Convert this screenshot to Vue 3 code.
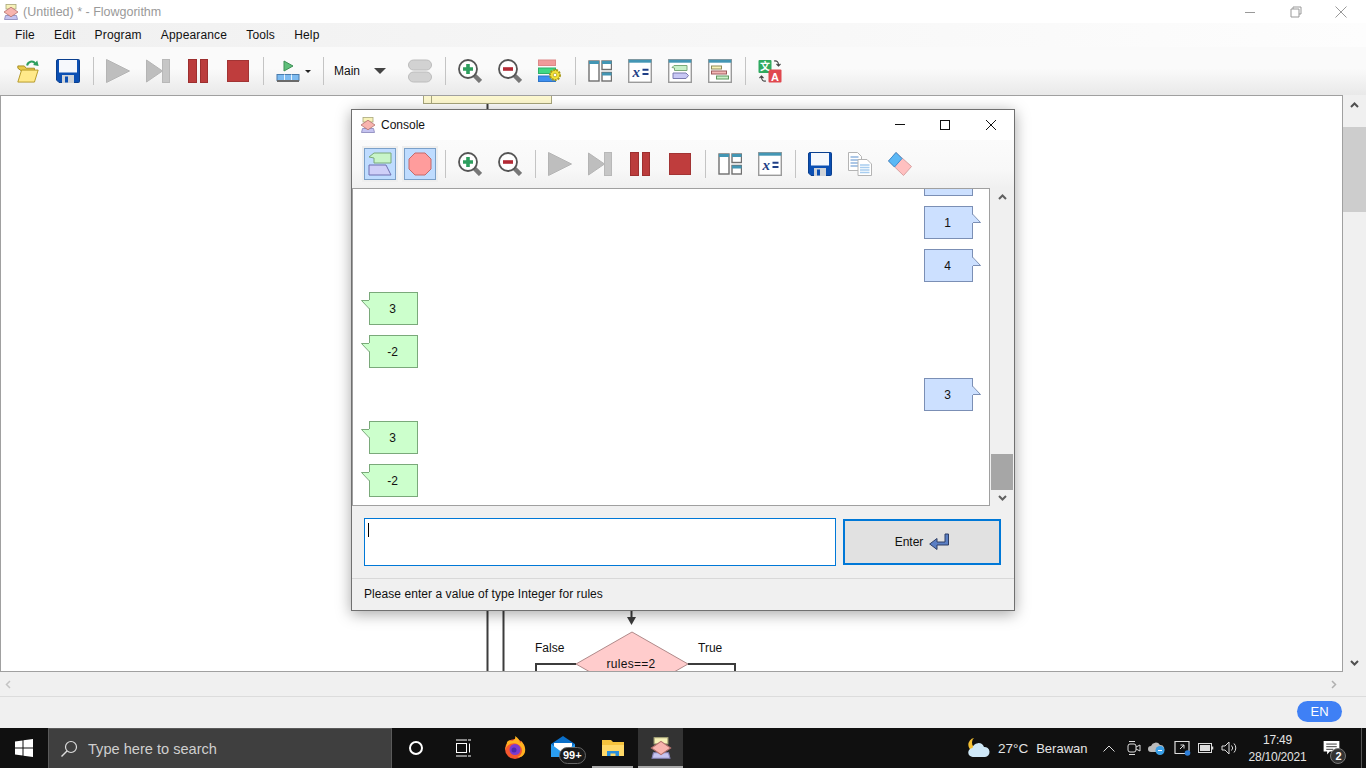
<template>
  <div class="app">
    <!-- icon sprite -->
    <svg class="sprite" aria-hidden="true">
      <symbol id="i-logo" viewBox="0 0 16 16">
        <rect x="3" y="0.5" width="10" height="4.5" fill="#f7f2b8" stroke="#a9a77a" stroke-width="0.8" />
        <path d="M2.5 11.5h11l1 4h-13z" fill="#c5c3f0" stroke="#8583b8" stroke-width="0.8" />
        <path d="M8 3.2 15 8 8 12.8 1 8z" fill="#f8b4ae" stroke="#b3706c" stroke-width="0.8" />
      </symbol>
      <symbol id="i-open" viewBox="0 0 24 26">
        <path d="M1 10V7.5h7l2 2.5h9v3H5z" fill="#e8c94a" stroke="#a58a1e" />
        <path d="M5 12h18l-4 13H1z" fill="#ffe98a" stroke="#b29520" />
        <path d="M11 7c1-4 6-6 9-2" fill="none" stroke="#2e9e5e" stroke-width="2.2" />
        <path d="M17.5 6.5 23.5 7.5 22 1.5z" fill="#2e9e5e" />
      </symbol>
      <symbol id="i-save" viewBox="0 0 24 24">
        <path d="M0.5 2Q0.5 0.5 2 0.5h20.5q1 0 1 1v21q0 1-1 1H3l-2.5-2.5z" fill="#0b4fb3" stroke="#0a3f8e" />
        <rect x="3" y="1" width="18" height="12.5" fill="#f6f8fc" />
        <rect x="6" y="16" width="12" height="8" fill="#cfd3d8" />
        <rect x="9" y="17.5" width="3" height="6" fill="#0b4fb3" />
      </symbol>
      <symbol id="i-play" viewBox="0 0 24 24">
        <path d="M0.5 0.5 23.5 12 0.5 23.5z" fill="#bebebe" stroke="#b4b4b4" />
      </symbol>
      <symbol id="i-step" viewBox="0 0 24 24">
        <path d="M0.5 1 16.5 12 0.5 23z" fill="#bebebe" stroke="#b4b4b4" />
        <rect x="16.5" y="0.5" width="7" height="23" fill="#c6c6c6" stroke="#b8b8b8" />
      </symbol>
      <symbol id="i-pause" viewBox="0 0 24 24">
        <rect x="2.5" y="0.5" width="8" height="23" fill="#bb3c3c" stroke="#9d2f2f" />
        <rect x="14.5" y="0.5" width="7" height="23" fill="#bb3c3c" stroke="#9d2f2f" />
      </symbol>
      <symbol id="i-stop" viewBox="0 0 24 24">
        <rect x="1.5" y="1.5" width="21" height="21" fill="#bf3d3d" stroke="#a23434" />
      </symbol>
      <symbol id="i-run" viewBox="0 0 24 24">
        <path d="M8 2 17 7 8 12z" fill="#5fbf7a" stroke="#3c8f55" />
        <rect x="1" y="15.5" width="22" height="6" fill="#7dbbf0" stroke="#4a7bab" />
        <path d="M8.5 15.5v6M15.5 15.5v6" stroke="#e8f2fb" />
        <rect x="1" y="21" width="22" height="2" fill="#6a6a6a" />
      </symbol>
      <symbol id="i-pills" viewBox="0 0 24 24">
        <rect x="0.5" y="1" width="23" height="10" rx="5" fill="#d2d2d2" stroke="#bcbcbc" />
        <rect x="0.5" y="13" width="23" height="10" rx="5" fill="#d2d2d2" stroke="#bcbcbc" />
      </symbol>
      <symbol id="i-zoomin" viewBox="0 0 24 24">
        <path d="M15 15 22.5 22.5" stroke="#777" stroke-width="4.5" />
        <circle cx="10" cy="10" r="9" fill="#fff" stroke="#555" stroke-width="1.8" />
        <path d="M10 5v10M5 10h10" stroke="#2e9e5e" stroke-width="3.6" />
      </symbol>
      <symbol id="i-zoomout" viewBox="0 0 24 24">
        <path d="M15 15 22.5 22.5" stroke="#777" stroke-width="4.5" />
        <circle cx="10" cy="10" r="9" fill="#fff" stroke="#555" stroke-width="1.8" />
        <path d="M5 10h10" stroke="#b32a35" stroke-width="3.6" />
      </symbol>
      <symbol id="i-layers" viewBox="0 0 24 24">
        <rect x="0.5" y="1" width="17" height="5.5" fill="#f09a9a" stroke="#d88" />
        <rect x="0.5" y="9" width="17" height="5.5" fill="#3fd884" stroke="#2fb06a" />
        <rect x="0.5" y="17" width="17" height="5.5" fill="#3d8ff0" stroke="#2f75c8" />
        <circle cx="17" cy="16" r="5" fill="#f5e33a" stroke="#a89a1a" stroke-width="2" stroke-dasharray="2 1" />
        <circle cx="17" cy="16" r="1.8" fill="#fff" stroke="#a89a1a" stroke-width="0.7" />
      </symbol>
      <symbol id="i-layout" viewBox="0 0 24 24">
        <rect x="1" y="2" width="10" height="20" fill="#fff" stroke="#707070" stroke-width="1.4" />
        <rect x="1" y="2" width="10" height="3" fill="#4396b4" />
        <rect x="14" y="2" width="9.5" height="8.5" fill="#fff" stroke="#707070" stroke-width="1.4" />
        <rect x="14" y="2" width="9.5" height="3" fill="#4396b4" />
        <rect x="14" y="13.5" width="9.5" height="8.5" fill="#fff" stroke="#707070" stroke-width="1.4" />
        <rect x="14" y="13.5" width="9.5" height="3" fill="#4396b4" />
      </symbol>
      <symbol id="i-vars" viewBox="0 0 24 24">
        <rect x="0.7" y="0.7" width="22.6" height="22.6" fill="#fff" stroke="#9a9a9a" stroke-width="1.4" />
        <rect x="0.7" y="0.7" width="22.6" height="3" fill="#4396b4" />
        <path d="M14.5 10.7h6M14.5 15h6" stroke="#1f3f86" stroke-width="2" />
      </symbol>
      <symbol id="i-console" viewBox="0 0 24 24">
        <rect x="0.7" y="0.7" width="22.6" height="22.6" fill="#fff" stroke="#9a9a9a" stroke-width="1.4" />
        <rect x="0.7" y="0.7" width="22.6" height="3" fill="#4396b4" />
        <path d="M6 6.5h13v5H6.500v-2.500L4 8.500z" fill="#c8f0c8" stroke="#7aa97a" />
        <path d="M5 14h13l2.500 2.500-2.500 3H5z" fill="#c8c8f5" stroke="#7a7ab0" />
      </symbol>
      <symbol id="i-chart" viewBox="0 0 24 24">
        <rect x="0.7" y="0.7" width="22.6" height="22.6" fill="#fff" stroke="#9a9a9a" stroke-width="1.4" />
        <rect x="0.7" y="0.7" width="22.6" height="3" fill="#4396b4" />
        <rect x="3.5" y="7" width="10" height="3" fill="#f7f2b8" stroke="#8d8b5a" />
        <rect x="3.5" y="12" width="15" height="3" fill="#f5b8b8" stroke="#9c5a5a" />
        <rect x="8.5" y="17" width="12" height="3" fill="#c8f0c8" stroke="#5f965f" />
      </symbol>
      <symbol id="i-translate" viewBox="0 0 24 24">
        <rect x="0.5" y="1" width="13" height="13" rx="1" fill="#2faa5f" />
        <rect x="10.5" y="10.5" width="13" height="13" rx="1" fill="#e0484f" />
        <path d="M16 2c3-.5 4.500 1 4.500 4M18.500 5l2 2 2-2" fill="none" stroke="#444" stroke-width="1.1" />
        <path d="M8 22c-3 .5-4.500-1-4.500-4M1.500 19l2-2 2 2" fill="none" stroke="#444" stroke-width="1.1" />
      </symbol>
      <symbol id="i-copy" viewBox="0 0 24 24">
        <path d="M.5.5h9l4 4v14H.5z" fill="#fff" stroke="#b4b4b4" />
        <path d="M2.500 5h8M2.500 8h8M2.500 11h8M2.500 14h8" stroke="#5b8fce" stroke-width="1.2" />
        <path d="M10 7.500h9l4.500 4.500v11.500H10z" fill="#fff" stroke="#b4b4b4" />
        <path d="M12 13h9.500M12 15.500h9.500M12 18h9.500M12 20.500h9.500" stroke="#a8cdf0" stroke-width="1.3" />
      </symbol>
      <symbol id="i-eraser" viewBox="0 0 24 24">
        <path d="M8 .5 23.500 14.500 15.500 23.500 .5 9z" fill="#ffc0c0" stroke="#d8a0a0" />
        <path d="M8 .5 14 6.500 6.500 15 .5 9z" fill="#5cb8f5" stroke="#3a8ed0" />
      </symbol>
    </svg>

    <!-- app title bar -->
    <header class="titlebar">
      <svg class="title-logo"><use href="#i-logo" /></svg>
      <span class="title-text">(Untitled) * - Flowgorithm</span>
      <div class="win-controls">
        <svg width="12" height="12" viewBox="0 0 12 12"><path d="M0 6.500h10" stroke="#999" /></svg>
        <svg width="12" height="12" viewBox="0 0 12 12"><path d="M3 3V1h8v7H9M1 3h8v8H1z" fill="none" stroke="#999" /></svg>
        <svg width="12" height="12" viewBox="0 0 12 12"><path d="M.5.5l11 11M11.500.5l-11 11" stroke="#999" /></svg>
      </div>
    </header>

    <nav class="menubar">
      <span v-for="m in menus" :key="m" class="menu-item">{{ m }}</span>
    </nav>

    <div class="toolbar">
      <template v-for="(t, i) in toolsLeft" :key="'l' + i">
        <span v-if="t === '|'" class="sep"></span>
        <span v-else class="tool"><svg class="ico"><use :href="'#i-' + t" /></svg></span>
      </template>
      <span class="tool tool-run">
        <svg class="ico"><use href="#i-run" /></svg>
        <svg class="mini-caret" width="6" height="3" viewBox="0 0 6 3"><path d="M0 0h6L3 3z" fill="#222" /></svg>
      </span>
      <span class="sep sep-narrow"></span>
      <span class="fn-select">
        <span>Main</span>
        <svg width="12" height="6" viewBox="0 0 12 6"><path d="M0 0h12L6 6z" fill="#444" /></svg>
      </span>
      <template v-for="(t, i) in toolsRight" :key="'r' + i">
        <span v-if="t === '|'" class="sep"></span>
        <span v-else class="tool">
          <svg class="ico" viewBox="0 0 24 24">
            <use :href="'#i-' + t" width="24" height="24" />
            <text v-if="t === 'vars'" x="4.5" y="18" class="var-x">x</text>
            <template v-if="t === 'translate'">
              <text x="7" y="11" class="tr-zh">文</text>
              <text x="17" y="21.500" class="tr-a">A</text>
            </template>
          </svg>
        </span>
      </template>
    </div>

    <main class="workspace">
      <div class="canvas">
        <!-- flowchart behind the console -->
        <svg class="flow" width="1342" height="576" viewBox="0 0 1342 576">
          <rect x="422.500" y="-4" width="128" height="11.500" fill="#fdf8cf" stroke="#a8a67c" />
          <path d="M430.500 0v7" stroke="#a8a67c" />
          <path d="M486.500 8v20M486.500 500v80M502.500 500v80" stroke="#3c3c3c" stroke-width="2" />
          <path d="M630.500 500v22" stroke="#3c3c3c" stroke-width="2" />
          <path d="M626 521h9l-4.500 8z" fill="#3c3c3c" />
          <path d="M575 568H535v12M687 568h47v12" fill="none" stroke="#3c3c3c" stroke-width="2" />
          <path d="M631 536 687 568 631 600 575 568z" fill="#ffcccc" stroke="#b08a8a" />
          <text x="534" y="556" class="flow-label">False</text>
          <text x="697" y="556" class="flow-label">True</text>
          <text x="630" y="572" text-anchor="middle" class="flow-label cond-label">rules==2</text>
        </svg>

        <!-- console window -->
        <section class="console">
          <div class="con-title">
            <svg class="title-logo"><use href="#i-logo" /></svg>
            <span>Console</span>
            <div class="con-controls">
              <svg width="12" height="12" viewBox="0 0 12 12"><path d="M0 5.500h10" stroke="#111" /></svg>
              <svg width="12" height="12" viewBox="0 0 12 12"><rect x=".5" y="1.500" width="9" height="9" fill="none" stroke="#111" /></svg>
              <svg width="12" height="12" viewBox="0 0 12 12"><path d="M1 1l10 10M11 1 1 11" stroke="#111" /></svg>
            </div>
          </div>

          <div class="con-toolbar">
            <span class="toggle">
              <svg class="ico" viewBox="0 0 24 24">
                <path d="M6 1h17v10H6V6L1 5z" fill="#c8f5c8" stroke="#7aa97a" />
                <path d="M1 13h17l5 10H1z" fill="#cfcff8" stroke="#6f6fb0" />
              </svg>
            </span>
            <span class="toggle">
              <svg class="ico" viewBox="0 0 24 24">
                <path d="M7 1h10l6 6v10l-6 6H7l-6-6V7z" fill="#ff9c9c" stroke="#c46a6a" />
              </svg>
            </span>
            <template v-for="(t, i) in consoleTools" :key="i">
              <span v-if="t === '|'" class="sep"></span>
              <span v-else class="tool">
                <svg class="ico" viewBox="0 0 24 24">
                  <use :href="'#i-' + t" width="24" height="24" />
                  <text v-if="t === 'vars'" x="4.5" y="18" class="var-x">x</text>
                </svg>
              </span>
            </template>
          </div>

          <div class="con-body">
            <div class="messages">
              <div v-for="(msg, i) in messages" :key="i" class="row" :class="msg.from">
                <div class="bubble">
                  <svg class="tail" width="9" height="18" viewBox="0 0 9 18">
                    <template v-if="msg.from === 'user'">
                      <path d="M0 8 9 17H0z" class="tail-fill" />
                      <path d="M0 7.500 8.500 16.500H1" class="tail-line" />
                    </template>
                    <template v-else>
                      <path d="M9 8H0L9 17z" class="tail-fill" />
                      <path d="M8 8.500H.5L8.500 17" class="tail-line" />
                    </template>
                  </svg>
                  {{ msg.text }}
                </div>
              </div>
            </div>
            <div class="con-scroll">
              <svg width="9" height="6" viewBox="0 0 9 6"><path d="M1 5l3.500-3.500L8 5" fill="none" stroke="#606060" stroke-width="2" /></svg>
              <div class="con-thumb"></div>
              <svg width="9" height="6" viewBox="0 0 9 6"><path d="M1 1l3.500 3.500L8 1" fill="none" stroke="#606060" stroke-width="2" /></svg>
            </div>
          </div>

          <div class="con-input">
            <div class="input-box"><span class="cursor"></span></div>
            <button class="enter-btn">
              Enter
              <svg width="20" height="18" viewBox="0 0 20 18">
                <path d="M19.500 1v11H8v4.500L.7 11 8 5.500V9h8V1z" fill="#5b7fc4" stroke="#2f3f66" />
              </svg>
            </button>
          </div>
          <div class="con-status">Please enter a value of type Integer for rules</div>
        </section>
      </div>

      <aside class="vscroll">
        <svg width="9" height="6" viewBox="0 0 9 6"><path d="M1 5l3.500-3.500L8 5" fill="none" stroke="#505050" stroke-width="2" /></svg>
        <div class="vthumb"></div>
        <svg width="9" height="6" viewBox="0 0 9 6"><path d="M1 1l3.500 3.500L8 1" fill="none" stroke="#505050" stroke-width="2" /></svg>
      </aside>
    </main>

    <div class="hscroll">
      <svg width="6" height="9" viewBox="0 0 6 9"><path d="M5 1 1.500 4.500 5 8" fill="none" stroke="#c4c4c4" stroke-width="1.5" /></svg>
      <svg width="6" height="9" viewBox="0 0 6 9"><path d="M1 1l3.500 3.500L1 8" fill="none" stroke="#b0b0b0" stroke-width="1.5" /></svg>
    </div>

    <div class="statusbar"><span class="lang-pill">EN</span></div>

    <!-- windows taskbar -->
    <footer class="taskbar">
      <span class="start">
        <svg width="18" height="18" viewBox="0 0 18 18">
          <path d="M0 2.500 7.500 1.400v7.100H0zM8.500 1.300 18 0v8.500H8.500zM0 9.500h7.500v7.100L0 15.500zM8.500 9.500H18V18l-9.500-1.300z" fill="#fff" />
        </svg>
      </span>
      <div class="search">
        <svg width="18" height="18" viewBox="0 0 18 18">
          <circle cx="11" cy="7" r="5.500" fill="none" stroke="#ddd" stroke-width="1.2" />
          <path d="M7 11 1.500 16.500" stroke="#ddd" stroke-width="1.4" />
        </svg>
        <span>Type here to search</span>
      </div>
      <span class="task-btn">
        <svg width="16" height="16" viewBox="0 0 16 16"><circle cx="8" cy="8" r="6" fill="none" stroke="#fff" stroke-width="2" /></svg>
      </span>
      <span class="task-btn">
        <svg width="18" height="18" viewBox="0 0 18 18">
          <path d="M1 1h11M1 17h11M13 1h3M13 17h3M14.500 4.500v9" stroke="#fff" fill="none" />
          <rect x="1.500" y="4.500" width="10" height="9" fill="none" stroke="#fff" />
        </svg>
      </span>
      <span class="task-btn firefox">
        <svg width="24" height="24" viewBox="0 0 24 24">
          <circle cx="12" cy="13" r="10" fill="#f5572f" />
          <path d="M4 6c0 3-2 6-2 8 3-8 12-9 16-3 2 3 1 9-4 10 6 1 9-4 8-9-1-4-3-6-4-7 0 2-1 2-1 2 0-3-2-5-5-7 1 3-1 4-3 5-2-1-3-1-5 1z" fill="#ffb21f" />
          <circle cx="12" cy="13.500" r="5.500" fill="#7b3bd0" />
          <circle cx="11" cy="14" r="2.500" fill="#4a2ab0" />
        </svg>
      </span>
      <span class="task-btn mail">
        <svg width="24" height="24" viewBox="0 0 24 24">
          <path d="M0 8 12 0l12 8v12H0z" fill="#0a6fc9" />
          <path d="M3 7h18v9H3z" fill="#fff" />
          <path d="M0 8l12 9 12-9v13H0z" fill="#2a9df0" />
        </svg>
        <span class="mail-count">99+</span>
      </span>
      <span class="task-btn running">
        <svg width="22" height="20" viewBox="0 0 22 20">
          <path d="M0 2h9l2 2h11v14H0z" fill="#f5c33d" />
          <path d="M0 7h22v11H0z" fill="#ffd968" />
          <path d="M5 18v-5h12v5h-3.500v-2.500h-5V18z" fill="#2a8fdc" />
        </svg>
      </span>
      <span class="task-btn active">
        <svg width="22" height="22"><use href="#i-logo" /></svg>
      </span>

      <div class="tray">
        <svg class="weather" width="24" height="22" viewBox="0 0 24 22">
          <path d="M7 1a7 7 0 1 0 8 9A6 6 0 0 1 7 1z" fill="#f5c033" />
          <path d="M6 20a4.500 4.500 0 0 1-.5-9 6 6 0 0 1 11.500-1 5 5 0 0 1 1 10z" fill="#cfe8f7" />
        </svg>
        <span class="temp">27°C</span>
        <span class="cond">Berawan</span>
        <svg class="chev" width="12" height="7" viewBox="0 0 12 7"><path d="M.5 6.500 6 1l5.500 5.500" fill="none" stroke="#ddd" /></svg>
        <svg width="14" height="16" viewBox="0 0 14 16">
          <rect x="1" y="4" width="8" height="8" rx="2" fill="none" stroke="#ddd" />
          <path d="M9 7l4-2v6l-4-2M2 1.500h6M2 14.500h6" fill="none" stroke="#ddd" />
        </svg>
        <svg width="18" height="14" viewBox="0 0 18 14">
          <path d="M3 11a3 3 0 0 1 0-6 5 5 0 0 1 9-1 4 4 0 0 1 3 7z" fill="#bbb" />
          <circle cx="12" cy="9.500" r="4.500" fill="#3aa0e8" />
          <path d="M10 9.500h4" stroke="#fff" />
        </svg>
        <svg width="18" height="16" viewBox="0 0 18 16">
          <path d="M2 13V1.500h14V11" fill="none" stroke="#ddd" stroke-width="1.2" />
          <path d="M1.500 13.500h11M7 9l4-4M7.500 5H11v3.500" fill="none" stroke="#ddd" />
          <circle cx="14.500" cy="13" r="2.800" fill="#2f7fd8" />
        </svg>
        <svg width="16" height="10" viewBox="0 0 16 10">
          <rect x=".5" y=".5" width="13" height="9" fill="none" stroke="#ddd" />
          <rect x="2" y="2" width="10" height="6" fill="#ddd" />
          <path d="M14.500 3.500v3" stroke="#ddd" stroke-width="1.5" />
        </svg>
        <svg width="17" height="14" viewBox="0 0 17 14">
          <path d="M1 5h3l4-4v12l-4-4H1z" fill="none" stroke="#ddd" />
          <path d="M10.500 4.500a3.500 3.500 0 0 1 0 5M13 2.500a6.500 6.500 0 0 1 0 9" fill="none" stroke="#ddd" />
        </svg>
        <div class="clock"><span>17:49</span><span>28/10/2021</span></div>
        <span class="notify">
          <svg width="17" height="14" viewBox="0 0 18 16">
            <path d="M0 0h18v12H7l-3 3.500V12H0z" fill="#fff" />
            <path d="M3 3.500h12M3 6.500h12M3 9.500h8" stroke="#222" />
          </svg>
          <span class="notify-count">2</span>
        </span>
      </div>
    </footer>
  </div>
</template>

<script setup>
const menus = ['File', 'Edit', 'Program', 'Appearance', 'Tools', 'Help'];

const toolsLeft = ['open', 'save', '|', 'play', 'step', 'pause', 'stop', '|'];
const toolsRight = ['pills', '|', 'zoomin', 'zoomout', 'layers', '|', 'layout', 'vars', 'console', 'chart', '|', 'translate'];
const consoleTools = ['|', 'zoomin', 'zoomout', '|', 'play', 'step', 'pause', 'stop', '|', 'layout', 'vars', '|', 'save', 'copy', 'eraser'];

// oldest one is scrolled mostly out of view
const messages = [
  { from: 'user', text: '' },
  { from: 'user', text: '1' },
  { from: 'user', text: '4' },
  { from: 'prog', text: '3' },
  { from: 'prog', text: '-2' },
  { from: 'user', text: '3' },
  { from: 'prog', text: '3' },
  { from: 'prog', text: '-2' },
];
</script>

<style>
html, body {
  margin: 0;
  height: 100%;
  overflow: hidden;
}
</style>

<style scoped>
.app {
  display: flex;
  flex-direction: column;
  width: 1366px;
  height: 768px;
  font-family: "Liberation Sans", Arial, sans-serif;
  font-size: 12px;
  color: #111;
  background: #f0f0f0;
  overflow: hidden;
}

.sprite {
  position: absolute;
  width: 0;
  height: 0;
}

.ico {
  width: 24px;
  height: 24px;
  display: block;
}

.var-x {
  font-family: "Liberation Serif", serif;
  font-style: italic;
  font-weight: 700;
  font-size: 15px;
  fill: #1f3f86;
}

.tr-zh {
  font-family: "Noto Sans CJK SC", sans-serif;
  font-size: 10px;
  font-weight: 700;
  fill: #fff;
  text-anchor: middle;
}

.tr-a {
  font-size: 11px;
  font-weight: 700;
  fill: #fff;
  text-anchor: middle;
}

/* Title + menu */
.titlebar {
  height: 23px;
  display: flex;
  align-items: center;
  padding-left: 3px;
  background: #fff;
}

.title-logo {
  width: 16px;
  height: 16px;
  margin-right: 4px;
}

.title-text {
  font-size: 12.5px;
  color: #999;
}

.win-controls {
  margin-left: auto;
  display: flex;
  gap: 33px;
  padding-right: 19px;
}

.menubar {
  height: 24px;
  display: flex;
  align-items: center;
  padding-left: 5.4px;
  background: linear-gradient(90deg, #f0f0f0, #fdfdfd);
}

.menu-item {
  padding: 0 9.6px;
  letter-spacing: 0.15px;
}

.toolbar {
  height: 48px;
  box-sizing: border-box;
  display: flex;
  align-items: center;
  padding-left: 8px;
  background: linear-gradient(180deg, #fafafa, #fafafa 45%, #e9e9e9);
}

.tool {
  width: 40px;
  height: 40px;
  flex: none;
  display: flex;
  align-items: center;
  justify-content: center;
}

.tool-run {
  width: 50px;
  gap: 5px;
  box-sizing: border-box;
  justify-content: flex-start;
  padding-left: 8px;
}

.sep {
  width: 10px;
  height: 28px;
  flex: none;
  position: relative;
}

.sep::before {
  content: "";
  position: absolute;
  left: 4.5px;
  top: 0;
  width: 1px;
  height: 100%;
  background: #c4c4c4;
}

.sep-narrow {
  width: 9px;
}

.fn-select {
  width: 73px;
  box-sizing: border-box;
  padding: 0 14px 0 7px;
  flex: none;
  display: flex;
  align-items: center;
  justify-content: space-between;
}

/* Canvas area */
.workspace {
  height: 577px;
  display: flex;
  flex: none;
}

.canvas {
  position: relative;
  flex: 1;
  background: #fff;
  border: 1px solid #a0a0a0;
  overflow: hidden;
}

.flow {
  position: absolute;
  left: 0;
  top: 0;
}

.flow-label {
  font-size: 12px;
  fill: #111;
}

.cond-label {
  letter-spacing: 0.3px;
}

.vscroll {
  width: 23px;
  display: flex;
  flex-direction: column;
  align-items: center;
  flex: none;
  background: #f0f0f0;
}

.vscroll > svg:first-child {
  margin-top: 7px;
}

.vscroll > svg:last-child {
  margin-top: auto;
  margin-bottom: 6px;
}

.vthumb {
  width: 100%;
  height: 85px;
  margin-top: 19px;
  background: #cdcdcd;
}

.hscroll {
  height: 24px;
  flex: none;
  display: flex;
  align-items: center;
  justify-content: space-between;
  padding: 0 29px 0 5px;
  background: #f0f0f0;
}

.statusbar {
  height: 32px;
  flex: none;
  box-sizing: border-box;
  display: flex;
  align-items: center;
  justify-content: flex-end;
  padding: 0 24px 2px 0;
  border-top: 1px solid #dcdcdc;
  background: #f0f0f0;
}

.lang-pill {
  width: 45px;
  height: 21px;
  border-radius: 11px;
  background: #3f80f5;
  color: #fff;
  font-size: 13px;
  display: flex;
  align-items: center;
  justify-content: center;
}

/* Console window */
.console {
  position: absolute;
  left: 350px;
  top: 13px;
  width: 664px;
  height: 502px;
  box-sizing: border-box;
  display: flex;
  flex-direction: column;
  background: #f0f0f0;
  border: 1px solid #707070;
  box-shadow: 0 3px 14px rgba(0, 0, 0, 0.35);
}

.con-title {
  height: 30px;
  flex: none;
  display: flex;
  align-items: center;
  padding-left: 8px;
  background: #fff;
}

.con-title .title-logo {
  margin-right: 5px;
}

.con-controls {
  margin-left: auto;
  display: flex;
  gap: 33px;
  padding-right: 17px;
}

.con-toolbar {
  height: 48px;
  flex: none;
  display: flex;
  align-items: center;
  padding-left: 8px;
  background: linear-gradient(180deg, #fbfbfb, #f8f8f8 60%, #f0f0f0);
}

.toggle {
  width: 40px;
  height: 40px;
  flex: none;
  display: flex;
  align-items: center;
  justify-content: center;
  position: relative;
}

.toggle::before {
  content: "";
  position: absolute;
  left: 4px;
  top: 4px;
  width: 30px;
  height: 30px;
  background: #bfdcff;
  border: 1px solid #7ba0c8;
  box-shadow: 0 0 0 2px #eeeeee;
}

.toggle .ico {
  position: relative;
}

.con-body {
  height: 318px;
  flex: none;
  display: flex;
}

.messages {
  flex: 1;
  min-width: 0;
  display: flex;
  flex-direction: column;
  justify-content: flex-end;
  gap: 10px;
  padding: 0 16px 8px 16px;
  background: #fff;
  border: 1px solid #a0a0a0;
  overflow: hidden;
}

.row {
  display: flex;
  flex: none;
}

.row.user {
  justify-content: flex-end;
}

.bubble {
  position: relative;
  width: 49px;
  height: 33px;
  box-sizing: border-box;
  display: flex;
  align-items: center;
  justify-content: center;
  padding-right: 2px;
}

.row.user .bubble {
  background: #cce0ff;
  border: 1px solid #7b8fb5;
}

.row.prog .bubble {
  background: #ccffcc;
  border: 1px solid #7aa97a;
}

.tail {
  position: absolute;
  top: -1px;
}

.tail-line {
  fill: none;
}

.row.user .tail {
  left: 47px;
}

.row.prog .tail {
  right: 47px;
}

.row.user .tail-fill {
  fill: #cce0ff;
}

.row.user .tail-line {
  stroke: #7b8fb5;
}

.row.prog .tail-fill {
  fill: #ccffcc;
}

.row.prog .tail-line {
  stroke: #7aa97a;
}

.con-scroll {
  width: 24px;
  flex: none;
  box-sizing: border-box;
  display: flex;
  flex-direction: column;
  align-items: center;
  background: #f0f0f0;
}

.con-scroll > svg:first-child {
  margin-top: 6px;
}

.con-thumb {
  width: 22px;
  height: 36px;
  margin-top: auto;
  margin-bottom: 5px;
  background: #a6a6a6;
}

.con-scroll > svg:last-child {
  margin-bottom: 5px;
}

.con-input {
  height: 73px;
  flex: none;
  box-sizing: border-box;
  display: flex;
  align-items: center;
  gap: 7px;
  padding: 0 13px 0 12px;
  border-bottom: 1px solid #d8d8d8;
}

.input-box {
  width: 472px;
  height: 48px;
  box-sizing: border-box;
  padding: 4px 3px;
  background: #fff;
  border: 1px solid #0078d7;
}

.cursor {
  display: block;
  width: 1px;
  height: 14px;
  background: #000;
}

.enter-btn {
  width: 158px;
  height: 46px;
  flex: none;
  display: flex;
  align-items: center;
  justify-content: center;
  gap: 6px;
  padding: 0;
  background: #e1e1e1;
  border: 2px solid #0078d7;
  font: inherit;
  color: #111;
}

.con-status {
  flex: 1;
  display: flex;
  align-items: center;
  padding-left: 12px;
  padding-bottom: 1px;
  letter-spacing: 0.06px;
}

/* Taskbar */
.taskbar {
  height: 40px;
  flex: none;
  display: flex;
  align-items: center;
  background: #101010;
  color: #e4e4e4;
}

.start {
  width: 48px;
  display: flex;
  justify-content: center;
}

.search {
  width: 344px;
  height: 40px;
  flex: none;
  box-sizing: border-box;
  display: flex;
  align-items: center;
  gap: 10px;
  padding-left: 11px;
  background: #3f3f3f;
  border: 1px solid #5a5a5a;
  border-bottom: 0;
  font-size: 14.6px;
  color: #cfcfcf;
}

.task-btn {
  width: 48px;
  height: 40px;
  flex: none;
  display: flex;
  align-items: center;
  justify-content: center;
  position: relative;
}

.firefox {
  margin-left: 3px;
}

.running {
  width: 41px;
  margin-left: 5px;
}

.running::after {
  content: "";
  position: absolute;
  left: 0;
  right: 0;
  bottom: 0;
  height: 2px;
  background: #aaa;
}

.active {
  width: 45px;
  margin-left: 5px;
  background: #333;
}

.active::after {
  content: "";
  position: absolute;
  left: 0;
  right: 0;
  bottom: 0;
  height: 2px;
  background: #aaa;
}

.mail-count {
  position: absolute;
  left: 20px;
  top: 19px;
  height: 15px;
  padding: 0 3px;
  border: 1px solid #666;
  border-radius: 9px;
  background: #1a1a1a;
  color: #fff;
  font-size: 11px;
  font-weight: 700;
  line-height: 15px;
}

.tray {
  flex: 1;
  display: flex;
  align-items: center;
  padding-left: 284px;
}

.tray::after {
  content: "";
  width: 1px;
  height: 40px;
  margin-left: auto;
  margin-right: 4px;
  background: #555;
}

.weather {
  margin-right: 7px;
}

.temp {
  font-size: 13.5px;
  margin-right: 8px;
}

.cond {
  font-size: 13px;
  margin-right: 16px;
}

.chev {
  margin-right: 12px;
}

.tray > svg:nth-of-type(n + 3) {
  margin-right: 7px;
}

.clock {
  width: 72px;
  display: flex;
  flex-direction: column;
  align-items: center;
  gap: 3px;
  font-size: 12px;
  letter-spacing: -0.2px;
  margin-left: -4px;
}

.notify {
  position: relative;
  margin-left: 10px;
  display: flex;
}

.notify-count {
  position: absolute;
  left: 7px;
  top: 7px;
  width: 16px;
  height: 16px;
  border-radius: 50%;
  background: #333;
  border: 1px solid #777;
  box-sizing: border-box;
  display: flex;
  align-items: center;
  justify-content: center;
  font-size: 11px;
  font-weight: 700;
  color: #fff;
}
</style>
